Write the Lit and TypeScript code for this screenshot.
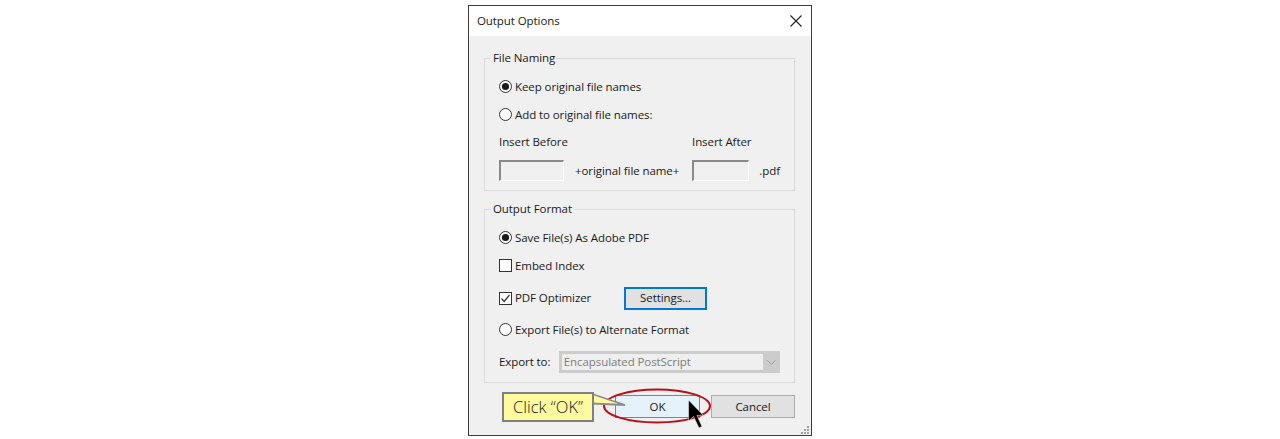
import { LitElement, html, css, svg } from 'lit';
import { customElement } from 'lit/decorators.js';

@customElement('app-root')
export class AppRoot extends LitElement {
  static styles = css`
    :host {
      display: flex;
      justify-content: center;
      width: 1280px;
      height: 439px;
      background: #fff;
      font-family: 'Open Sans', 'Noto Sans', sans-serif;
      font-size: 11.5px;
      letter-spacing: -0.08px;
      color: #1a1a1a;
      overflow: hidden;
    }
    .window {
      position: relative;
      box-sizing: border-box;
      width: 344px;
      height: 431px;
      margin-top: 5px;
      border: 1px solid #3c3c3c;
      background: #f0f0f0;
    }
    .titlebar {
      display: flex;
      align-items: center;
      justify-content: space-between;
      height: 30px;
      padding: 0 9px 0 8px;
      background: #fff;
    }
    .title {
      padding-bottom: 2px;
    }
    .client {
      padding: 22px 16px 0 15px;
    }
    .group {
      position: relative;
      box-sizing: border-box;
      display: flex;
      flex-direction: column;
      border: 1px solid #dcdcdc;
      padding: 18px 14px 0;
    }
    .group.naming {
      height: 133px;
    }
    .group.format {
      height: 174px;
      margin-top: 18px;
    }
    .legend {
      position: absolute;
      top: -10px;
      left: 6px;
      padding: 0 2px;
      background: #f0f0f0;
      line-height: 18px;
    }
    .row {
      box-sizing: border-box;
      display: flex;
      align-items: center;
      height: 20px;
      padding-bottom: 1px;
      line-height: 19px;
      white-space: nowrap;
    }
    .mt8 {
      margin-top: 8px;
    }
    .mt7 {
      margin-top: 7px;
    }
    .mark {
      flex: none;
      width: 13px;
      height: 13px;
      margin-right: 3px;
    }
    .caption-before {
      width: 193px;
    }
    .inputs {
      display: flex;
      align-items: center;
      height: 21px;
      margin-top: 8px;
      white-space: nowrap;
    }
    .field {
      flex: none;
      box-sizing: border-box;
      height: 21px;
      border: 1px solid #fff;
      border-top: 2px solid #8a8a8a;
      border-left: 2px solid #8a8a8a;
      background: #f0f0f0;
    }
    .field.before {
      width: 65px;
      margin-right: 11px;
    }
    .file-name {
      width: 118px;
    }
    .field.after {
      width: 57px;
      margin-right: 10px;
    }
    .optimizer {
      height: 23px;
      margin-top: 11px;
      padding-bottom: 0;
    }
    .optimizer .label {
      width: 109px;
      padding-bottom: 2px;
    }
    .settings {
      box-sizing: border-box;
      width: 83px;
      height: 23px;
      border: 2px solid #0078d7;
      background: #e1e1e1;
      text-align: center;
      line-height: 17px;
    }
    .export-radio {
      margin-top: 10px;
    }
    .export-to {
      height: 22px;
      margin-top: 11px;
      padding-bottom: 0;
    }
    .export-to .label {
      width: 60px;
      padding-bottom: 2px;
    }
    .select {
      box-sizing: border-box;
      display: flex;
      align-items: center;
      justify-content: space-between;
      width: 222px;
      height: 22px;
      border: 3px solid #cccccc;
      background: #efefef;
      color: #7d7d7d;
      padding-left: 2px;
    }
    .select-text {
      padding-bottom: 2px;
    }
    .arrow {
      box-sizing: border-box;
      display: flex;
      align-items: center;
      justify-content: center;
      width: 17px;
      height: 22px;
      margin-right: -3px;
      background: #cccccc;
    }
    .footer {
      display: flex;
      justify-content: flex-end;
      gap: 11px;
      margin-top: 12px;
    }
    .btn {
      box-sizing: border-box;
      height: 23px;
      text-align: center;
      line-height: 21px;
      border: 1px solid #adadad;
      background: #e1e1e1;
    }
    .btn.ok {
      width: 85px;
      border-color: #3d95de;
      background: #e5f1fb;
    }
    .btn.cancel {
      width: 84px;
    }
    .grip {
      position: absolute;
      right: 2px;
      bottom: 1px;
    }
    .annotation {
      position: absolute;
      left: -1px;
      top: -1px;
      pointer-events: none;
    }
    .callout {
      position: absolute;
      left: 33px;
      top: 386px;
      box-sizing: border-box;
      width: 92px;
      height: 30px;
      border: 2.5px solid #808080;
      background: #fdfb9e;
      font-size: 16.5px;
      font-weight: 300;
      letter-spacing: 0;
      line-height: 26px;
      text-align: center;
      color: #222;
    }
  `;

  private radio(on: boolean) {
    return html`<svg class="mark" viewBox="0 0 13 13">
      <circle cx="6.5" cy="6.5" r="6" fill="#fff" stroke="#333" stroke-width="1"></circle>
      ${on ? svg`<circle cx="6.5" cy="6.5" r="3.6" fill="#1a1a1a"></circle>` : ''}
    </svg>`;
  }

  private check(on: boolean) {
    return html`<svg class="mark" viewBox="0 0 13 13">
      <rect x="0.5" y="0.5" width="12" height="12" fill="#fff" stroke="#333"></rect>
      ${on ? svg`<path d="M2.5 6.5 L5.2 9.5 L10.5 3" fill="none" stroke="#333" stroke-width="1.2"></path>` : ''}
    </svg>`;
  }

  render() {
    return html`
      <div class="window">
        <div class="titlebar">
          <span class="title">Output Options</span>
          <svg width="12" height="12" viewBox="0 0 12 12">
            <path d="M0.5 0.5 L11.5 11.5 M11.5 0.5 L0.5 11.5" stroke="#222" stroke-width="1.1" fill="none"></path>
          </svg>
        </div>
        <div class="client">
          <div class="group naming">
            <span class="legend">File Naming</span>
            <div class="row">${this.radio(true)}Keep original file names</div>
            <div class="row mt8">${this.radio(false)}Add to original file names:</div>
            <div class="row mt7">
              <span class="caption-before">Insert Before</span>
              <span>Insert After</span>
            </div>
            <div class="inputs">
              <div class="field before"></div>
              <span class="file-name">+original file name+</span>
              <div class="field after"></div>
              <span>.pdf</span>
            </div>
          </div>
          <div class="group format">
            <span class="legend">Output Format</span>
            <div class="row">${this.radio(true)}Save File(s) As Adobe PDF</div>
            <div class="row mt8">${this.check(false)}Embed Index</div>
            <div class="row optimizer">
              ${this.check(true)}<span class="label">PDF Optimizer</span>
              <div class="settings">Settings...</div>
            </div>
            <div class="row export-radio">${this.radio(false)}Export File(s) to Alternate Format</div>
            <div class="row export-to">
              <span class="label">Export to:</span>
              <div class="select">
                <span class="select-text">Encapsulated PostScript</span>
                <div class="arrow">
                  <svg width="9" height="5" viewBox="0 0 9 5">
                    <path d="M0.5 0.5 L4.5 4.5 L8.5 0.5" fill="none" stroke="#9a9a9a"></path>
                  </svg>
                </div>
              </div>
            </div>
          </div>
          <div class="footer">
            <div class="btn ok">OK</div>
            <div class="btn cancel">Cancel</div>
          </div>
        </div>
        <svg class="grip" width="8" height="8" viewBox="0 0 8 8" fill="#a0a0a0">
          <rect x="6" y="0" width="2" height="2"></rect>
          <rect x="3" y="3" width="2" height="2"></rect>
          <rect x="6" y="3" width="2" height="2"></rect>
          <rect x="0" y="6" width="2" height="2"></rect>
          <rect x="3" y="6" width="2" height="2"></rect>
          <rect x="6" y="6" width="2" height="2"></rect>
        </svg>
        <svg class="annotation" width="344" height="431" viewBox="468 5 344 431">
          <ellipse cx="657" cy="406" rx="53" ry="16.5" fill="none" stroke="#b8101c" stroke-width="2"></ellipse>
          <path d="M592 395 L625 405 L592 403 Z" fill="#fdfb9e"></path>
          <path d="M592 394 L625 405 L592 403.5" fill="none" stroke="#8c8c8c" stroke-width="1.8"></path>
          <path d="M688.5 400 L688.5 421 L693.5 416.5 L699 428 L702 426.5 L697 415.5 L703 415 Z" fill="#000" stroke="#fff" stroke-width="0.5"></path>
        </svg>
        <div class="callout">Click “OK”</div>
      </div>
    `;
  }
}
